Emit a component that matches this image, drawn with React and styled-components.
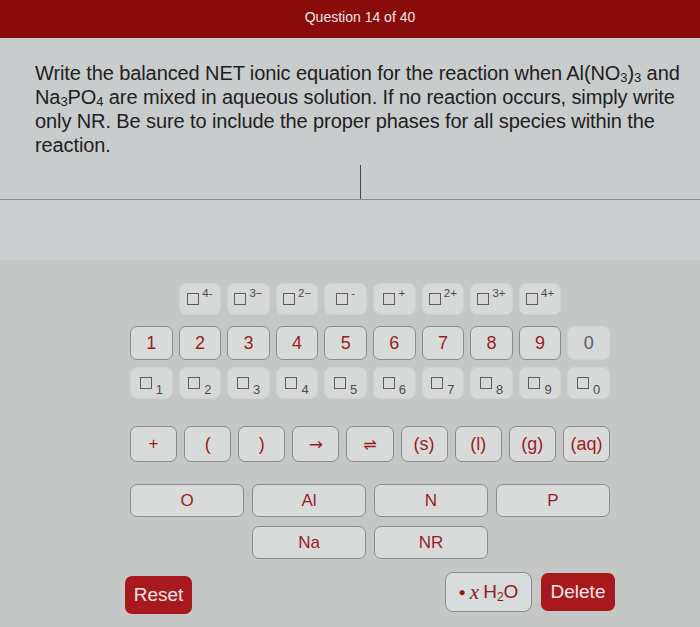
import React from 'react';
import styled, { createGlobalStyle } from 'styled-components';

const GlobalStyle = createGlobalStyle`
  html, body {
    margin: 0;
    padding: 0;
    background: #c4c7c6;
    font-family: 'Liberation Sans', Arial, sans-serif;
  }
`;

const Page = styled.div`
  width: 700px;
  height: 627px;
  overflow: hidden;
  background: #c4c7c6;
`;

const Header = styled.div`
  height: 38px;
  background: #890b0b;
  display: flex;
  align-items: center;
  justify-content: center;
  padding-left: 20px;
  padding-bottom: 4px;
  box-sizing: border-box;
  color: #f1e6e6;
  font-size: 14px;
`;

const QuestionPanel = styled.div`
  background: #c9cccd;
  padding: 23px 10px 0 35px;
`;

const QuestionText = styled.p`
  margin: 0;
  font-size: 20px;
  line-height: 24px;
  color: #1f2021;
  letter-spacing: -0.1px;
`;

const Chem = styled.sub`
  font-size: 13px;
  line-height: 0;
  vertical-align: -2px;
`;

const AnswerField = styled.div`
  height: 42px;
  margin-left: -35px;
  margin-right: -10px;
  border-bottom: 1px solid #8c8f90;
  display: flex;
  align-items: flex-end;
  padding-left: 360px;
`;

const Caret = styled.div`
  width: 1px;
  height: 34px;
  background: #3b4a66;
`;

const Band = styled.div`
  height: 60px;
  background: #cacdce;
`;

const Keypad = styled.div`
  margin-left: 130px;
  width: 480px;
  padding-top: 23px;
`;

const Grid = styled.div`
  display: grid;
  grid-template-columns: repeat(${p => p.$cols}, 1fr);
  column-gap: ${p => p.$gap}px;
  height: ${p => p.$h}px;
  margin-bottom: ${p => p.$mb}px;
`;

const Key = styled.button`
  font-family: ${p =>
    p.$glyph ? "'DejaVu Sans', sans-serif" : "'Liberation Sans', Arial, sans-serif"};
  grid-column: ${p => p.$col || 'auto'};
  background: ${p => (p.$soft ? '#d7d9d9' : '#d9dbdb')};
  border: 1px solid ${p => (p.$soft ? '#cfd1d1' : '#8a8c8c')};
  border-radius: 7px;
  color: ${p => p.$tone || '#9a1d1f'};
  font-size: ${p => p.$fs || 18}px;
  padding: 0;
  display: flex;
  align-items: center;
  justify-content: center;
  cursor: pointer;
`;

const Square = styled.span`
  display: inline-block;
  width: 12px;
  height: 12px;
  border: 1.3px solid #5a5c5e;
  box-sizing: border-box;
`;

const Sup = styled.span`
  font-size: 11.5px;
  color: #4a4c4e;
  position: relative;
  top: -6px;
  margin-left: 3px;
`;

const Sub = styled.span`
  font-size: 13px;
  color: #4a4c4e;
  position: relative;
  top: 6px;
  margin-left: 4px;
`;

const SquareWrap = styled.span`
  display: inline-flex;
  align-items: center;
`;

const BottomRow = styled.div`
  margin-left: -5px;
  width: 490px;
  display: flex;
  justify-content: space-between;
  align-items: center;
`;

const RightGroup = styled.div`
  display: flex;
  gap: 9px;
  align-items: center;
`;

const RedButton = styled.button`
  font-family: 'Liberation Sans', Arial, sans-serif;
  height: 38px;
  width: ${p => p.$w}px;
  background: #a8191d;
  border: none;
  border-radius: 7px;
  color: #f6e9e9;
  font-size: 19px;
  padding: 0;
  margin-top: ${p => p.$mt || 0}px;
`;

const WaterButton = styled.button`
  font-family: 'Liberation Sans', Arial, sans-serif;
  height: 40px;
  width: 87px;
  background: #d9dcdc;
  border: 1px solid #8a8c8c;
  border-radius: 8px;
  color: #8e1b1d;
  font-size: 19px;
  padding: 0;
  display: flex;
  align-items: center;
  justify-content: center;
  gap: 4px;
  sub {
    font-size: 12px;
    vertical-align: -3px;
    line-height: 0;
  }
`;

const Dot = styled.span`
  font-size: 12px;
`;

const Italic = styled.span`
  font-family: 'Liberation Serif', 'Times New Roman', serif;
  font-style: italic;
  font-size: 21px;
`;

const charges = ['4-', '3\u2212', '2\u2212', '-', '+', '2+', '3+', '4+'];
const digits = ['1', '2', '3', '4', '5', '6', '7', '8', '9', '0'];
const subs = ['1', '2', '3', '4', '5', '6', '7', '8', '9', '0'];
const symbols = [
  { t: '+', fs: 17 },
  { t: '(', fs: 18 },
  { t: ')', fs: 18 },
  { t: '\u2192', fs: 17, glyph: true },
  { t: '\u21CC', fs: 16, glyph: true },
  { t: '(s)', fs: 18 },
  { t: '(l)', fs: 18 },
  { t: '(g)', fs: 18 },
  { t: '(aq)', fs: 18 },
];
const elements = ['O', 'Al', 'N', 'P'];

export default function App() {
  return (
    <Page>
      <GlobalStyle />
      <Header>Question 14 of 40</Header>
      <QuestionPanel>
        <QuestionText>
          Write the balanced NET ionic equation for the reaction when Al(NO<Chem>3</Chem>)<Chem>3</Chem> and
          <br />
          Na<Chem>3</Chem>PO<Chem>4</Chem> are mixed in aqueous solution. If no reaction occurs, simply write
          <br />
          only NR. Be sure to include the proper phases for all species within the
          <br />
          reaction.
        </QuestionText>
        <AnswerField>
          <Caret />
        </AnswerField>
      </QuestionPanel>
      <Band />
      <Keypad>
        <Grid $cols={10} $gap={6} $h={32} $mb={11}>
          {charges.map((c, i) => (
            <Key key={c} $soft $col={i === 0 ? 2 : undefined}>
              <SquareWrap>
                <Square />
                <Sup>{c}</Sup>
              </SquareWrap>
            </Key>
          ))}
        </Grid>
        <Grid $cols={10} $gap={6} $h={34} $mb={7}>
          {digits.map(d => (
            <Key key={d} $soft={d === '0'} $tone={d === '0' ? '#5a5c5e' : undefined}>
              {d}
            </Key>
          ))}
        </Grid>
        <Grid $cols={10} $gap={6} $h={32} $mb={27}>
          {subs.map(s => (
            <Key key={s} $soft>
              <SquareWrap>
                <Square />
                <Sub>{s}</Sub>
              </SquareWrap>
            </Key>
          ))}
        </Grid>
        <Grid $cols={9} $gap={7} $h={36} $mb={22}>
          {symbols.map(s => (
            <Key key={s.t} $fs={s.fs} $glyph={s.glyph}>
              {s.t}
            </Key>
          ))}
        </Grid>
        <Grid $cols={4} $gap={8} $h={33} $mb={9}>
          {elements.map(e => (
            <Key key={e} $fs={17}>
              {e}
            </Key>
          ))}
        </Grid>
        <Grid $cols={4} $gap={8} $h={33} $mb={11}>
          <Key $col={2} $fs={17}>Na</Key>
          <Key $fs={17}>NR</Key>
        </Grid>
        <BottomRow>
          <RedButton $w={67} $mt={6}>Reset</RedButton>
          <RightGroup>
            <WaterButton>
              <Dot>&#9679;</Dot>
              <Italic>x</Italic>
              <span>
                H<sub>2</sub>O
              </span>
            </WaterButton>
            <RedButton $w={74}>Delete</RedButton>
          </RightGroup>
        </BottomRow>
      </Keypad>
    </Page>
  );
}
